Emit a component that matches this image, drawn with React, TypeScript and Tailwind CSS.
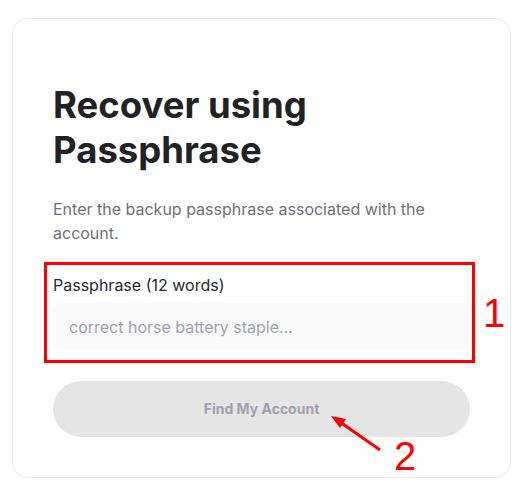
import React from "react";

export default function App() {
  return (
    <div
      className="relative h-[490px] w-[521px] bg-white pl-[12px] pt-[18px]"
      style={{ fontFamily: "Inter, 'Noto Sans', sans-serif" }}
    >
      <div className="w-[499px] rounded-2xl border border-[#ececec] bg-white px-10 pb-10 pt-16">
        <h1 className="text-[36.5px] font-bold leading-[45px] text-[#1f2328]">
          Recover using
          <br />
          Passphrase
        </h1>
        <p className="mt-6 text-base leading-6 text-[#71717a]">
          Enter the backup passphrase associated with the account.
        </p>
        <div className="mt-7">
          <label className="block text-base leading-6 text-[#1f2937]">Passphrase (12 words)</label>
          <input
            type="text"
            placeholder="correct horse battery staple..."
            className="mt-1.5 h-[47px] w-full rounded-lg bg-[#fafafa] px-4 text-base text-[#1f2937] outline-none placeholder:text-[#a1a1aa]"
          />
        </div>
        <button
          disabled
          className="mt-[31px] flex h-14 w-full items-center justify-center rounded-full bg-[#e5e5e5] text-sm font-bold text-[#a1a1aa]"
        >
          Find My Account
        </button>
      </div>

      {/* annotations drawn over the screenshot */}
      <div className="pointer-events-none absolute left-[44px] top-[262px] h-[101px] w-[431px] border-[3px] border-[#ff0000]" />
      <span
        className="pointer-events-none absolute left-[483px] top-[293px] text-[40px] leading-none text-[#ff0000]"
        style={{ fontFamily: "'Liberation Sans', Arial, sans-serif" }}
      >
        1
      </span>
      <span
        className="pointer-events-none absolute left-[394px] top-[436px] text-[40px] leading-none text-[#ff0000]"
        style={{ fontFamily: "'Liberation Sans', Arial, sans-serif" }}
      >
        2
      </span>
      <svg className="pointer-events-none absolute left-0 top-0" width="521" height="490">
        <line x1="380" y1="450" x2="340" y2="422" stroke="#ff0000" strokeWidth="3" />
        <polygon points="331,416 346,419 340,428" fill="#ff0000" />
      </svg>
    </div>
  );
}
